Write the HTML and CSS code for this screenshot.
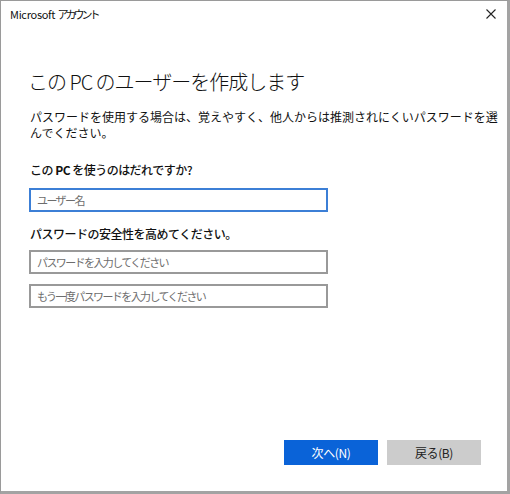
FILE: index.html
```html
<!DOCTYPE html>
<html lang="ja">
<head>
<meta charset="utf-8">
<link rel="stylesheet" href="styles.css">
</head>
<body>
<div class="window">
  <div class="titlebar">
    <span class="title">Microsoft <span class="kana">アカウント</span></span>
    <svg class="close" width="10" height="10" viewBox="0 0 10 10"><path d="M0.5 0.5L9.5 9.5M9.5 0.5L0.5 9.5" stroke="#222" stroke-width="1.1" fill="none"/></svg>
  </div>
  <div class="content">
    <h1 class="heading">この PC のユーザーを作成します</h1>
    <p class="desc">パスワードを使用する場合は、覚えやすく、他人からは推測されにくいパスワードを選んでください。</p>
    <div class="label label-first">この <b>PC</b> を使うのはだれですか?</div>
    <div class="field field-focus field-first"><span class="ph">ユーザー名</span></div>
    <div class="label label-second">パスワードの安全性を高めてください。</div>
    <div class="field field-pw"><span class="ph">パスワードを入力してください</span></div>
    <div class="field field-pw2"><span class="ph">もう一度パスワードを入力してください</span></div>
    <div class="buttons">
      <div class="btn btn-primary">次へ(N)</div>
      <div class="btn btn-secondary">戻る(B)</div>
    </div>
  </div>
</div>
</body>
</html>
```
FILE: styles.css
```css
html, body {
  margin: 0;
  padding: 0;
  background: #ffffff;
}
body {
  font-family: "Noto Sans CJK JP", "Noto Sans", sans-serif;
  color: #000;
}
.window {
  box-sizing: border-box;
  width: 510px;
  height: 494px;
  border-left: 1px solid #9a9a9a;
  border-top: 1px solid #9a9a9a;
  border-right: 3px solid #a3a3a3;
  border-bottom: 3px solid #a3a3a3;
  display: flex;
  flex-direction: column;
  background: #fff;
}
.titlebar {
  height: 25px;
  display: flex;
  align-items: center;
  justify-content: space-between;
  padding: 0 11px 0 9px;
  flex: none;
}
.title {
  font-size: 11px;
  color: #111;
  letter-spacing: -0.3px;
}
.title .kana {
  letter-spacing: -3px;
}
.close {
  display: block;
}
.content {
  flex: 1;
  display: flex;
  flex-direction: column;
  padding: 0 26px 26px 29px;
}
.heading {
  margin: 42px 0 0 -2px;
  font-size: 20px;
  line-height: 28px;
  font-weight: 300;
  color: #111;
  letter-spacing: -1px;
}
.desc {
  margin: 13px 0 0 0;
  font-size: 12px;
  line-height: 16px;
  color: #111;
  width: 470px;
}
.label {
  font-size: 12px;
  line-height: 16px;
  font-weight: 500;
  color: #111;
  letter-spacing: -0.5px;
}
.label b {
  font-weight: 700;
}
.label-first { margin-top: 21px; }
.label-second { margin-top: 14px; }
.field {
  box-sizing: border-box;
  width: 299px;
  height: 24px;
  margin-left: -1px;
  border: 2px solid #999;
  display: flex;
  align-items: center;
  padding-left: 6px;
}
.field-focus { border-color: #3c7fd6; }
.field-first { margin-top: 10px; }
.field-pw { margin-top: 8px; }
.field-pw2 { margin-top: 10px; }
.ph {
  font-size: 11px;
  color: #6d6d6d;
  letter-spacing: -1.6px;
}
.buttons {
  margin-top: auto;
  display: flex;
  justify-content: flex-end;
  gap: 9px;
}
.btn {
  box-sizing: border-box;
  width: 94px;
  height: 25px;
  display: flex;
  align-items: center;
  justify-content: center;
  font-size: 12px;
  letter-spacing: -0.4px;
}
.btn-primary {
  background: #0a63d8;
  color: #fff;
}
.btn-secondary {
  background: #cccccc;
  color: #222;
}
```
